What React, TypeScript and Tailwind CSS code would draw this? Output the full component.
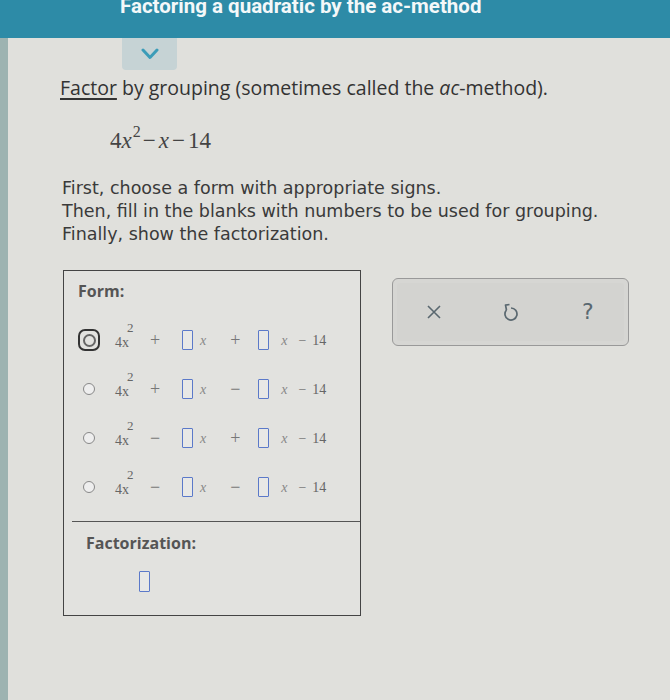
import React from "react";

const Blank = ({ className = "" }: { className?: string }) => (
  <span className={"inline-block w-[11px] h-[20px] border-[1.5px] border-[#5b79c9] rounded-[1px] bg-[#e8e8e6] " + className} />
);

const Radio = ({ selected }: { selected?: boolean }) =>
  selected ? (
    <span className="flex items-center justify-center w-[22px] h-[22px] rounded-[7px] border-[2.5px] border-[#333]">
      <span className="w-[13px] h-[13px] rounded-full border-[2px] border-[#666]" />
    </span>
  ) : (
    <span className="flex items-center justify-center w-[22px] h-[22px]">
      <span className="w-[12px] h-[12px] rounded-full border-[1.5px] border-[#888] bg-[#eee]" />
    </span>
  );

const Row = ({ s1, s2, selected }: { s1: string; s2: string; selected?: boolean }) => (
  <div className="flex items-center h-[49px] pl-[14px]" style={{ fontFamily: '"Liberation Serif", serif' }}>
    <Radio selected={selected} />
    <span className="relative ml-[15px] w-[26px] text-[14px] text-[#666] mt-[5px]">
      4x
      <span className="absolute left-[12px] top-[-14px] text-[13px]">2</span>
    </span>
    <span className="w-[24px] ml-[2px] text-[18px] text-[#777] text-center">{s1}</span>
    <span className="ml-[15px] flex items-center"><Blank /></span>
    <span className="ml-[7px] text-[14px] italic text-[#888]">x</span>
    <span className="w-[22px] ml-[18px] text-[18px] text-[#777] text-center">{s2}</span>
    <span className="ml-[12px] flex items-center"><Blank /></span>
    <span className="ml-[12px] text-[14px] italic text-[#888]">x</span>
    <span className="ml-[11px] text-[14px] text-[#777]">−</span>
    <span className="ml-[6px] text-[14px] text-[#666]">14</span>
  </div>
);

export default function App() {
  return (
    <div className="w-[670px] h-[700px] overflow-hidden bg-[#dfdfdb] flex flex-col" style={{ fontFamily: '"Open Sans", sans-serif' }}>
      <div className="h-[38px] bg-[#2d8ba7] overflow-hidden shrink-0 pl-[120px]">
        <div className="text-[#f4f8f9] font-bold text-[20.5px] leading-[20px] mt-[-4px]" style={{ fontFamily: 'Roboto, sans-serif' }}>
          Factoring a quadratic by the ac-method
        </div>
      </div>
      <div className="flex flex-1">
        <div className="w-[8px] bg-[#9db3b1] shrink-0" />
        <div className="flex-1 bg-[#e0e0dc]">
          <div className="ml-[114px] w-[55px] h-[32px] bg-[#c6d3d5] rounded-b-[4px] flex items-center justify-center">
            <svg width="18" height="12" viewBox="0 0 18 12">
              <path d="M2 2 L9 9.5 L16 2" stroke="#3b9cb8" strokeWidth="3" fill="none" strokeLinecap="round" strokeLinejoin="round" />
            </svg>
          </div>
          <div className="ml-[52px] mt-[3px] text-[19.5px] text-[#333]">
            <span className="underline decoration-[1.5px] underline-offset-[3px]">Factor</span> by grouping (sometimes called the <i>ac</i>-method).
          </div>
          <div className="ml-[102px] mt-[22px] text-[23px] text-[#444] flex items-baseline" style={{ fontFamily: '"Liberation Serif", serif' }}>
            <span>4<i>x</i></span>
            <span className="inline-block text-[16px] -translate-y-[11px] ml-[1px]">2</span>
            <span className="ml-[2px]">−</span>
            <i className="ml-[3px]">x</i>
            <span className="ml-[3px]">−</span>
            <span className="ml-[3px]">14</span>
          </div>
          <div className="ml-[54px] mt-[18px] text-[17.5px] leading-[23px] text-[#3a3a3a]" style={{ fontFamily: '"DejaVu Sans", sans-serif' }}>
            <div>First, choose a form with appropriate signs.</div>
            <div>Then, fill in the blanks with numbers to be used for grouping.</div>
            <div>Finally, show the factorization.</div>
          </div>
          <div className="flex items-start mt-[24px] ml-[55px]">
            <div className="w-[298px] border-[1.5px] border-[#444] bg-[#e2e2df]">
              <div className="pt-[8px] pb-[9px]">
                <div className="ml-[14px] text-[16px] font-bold text-[#555]">Form:</div>
                <div className="mt-[13px]">
                  <Row s1="+" s2="+" selected />
                  <Row s1="+" s2="−" />
                  <Row s1="−" s2="+" />
                  <Row s1="−" s2="−" />
                </div>
              </div>
              <div className="border-t-[1.5px] border-[#555] ml-[8px] h-[94px] pt-[9px]">
                <div className="ml-[14px] text-[16px] font-bold text-[#555]">Factorization:</div>
                <div className="ml-[67px] mt-[16px] flex"><Blank className="h-[21px]" /></div>
              </div>
            </div>
            <div className="ml-[31px] mt-[8px] w-[237px] h-[68px] rounded-[6px] border border-[#999] bg-[#d6d6d3] p-[4px]">
              <div className="w-full h-full rounded-[3px] bg-[#d3d3d0] flex items-center pl-[29px]">
                <svg width="16" height="16" viewBox="0 0 16 16">
                  <path d="M2 2 L14 14 M14 2 L2 14" stroke="#5a6870" strokeWidth="1.6" />
                </svg>
                <svg width="20" height="22" viewBox="0 0 20 22" className="ml-[58px]">
                  <path d="M6.5 9 A6 6 0 1 0 11 7" stroke="#5a6870" strokeWidth="1.7" fill="none" />
                  <path d="M9.5 3.5 L5.5 4.2 L6.5 9" stroke="#5a6870" strokeWidth="1.7" fill="none" strokeLinejoin="round" />
                </svg>
                <span className="ml-[62px] text-[22px] text-[#5a6870] leading-none" style={{ fontFamily: '"DejaVu Sans", sans-serif' }}>?</span>
              </div>
            </div>
          </div>
        </div>
      </div>
    </div>
  );
}
